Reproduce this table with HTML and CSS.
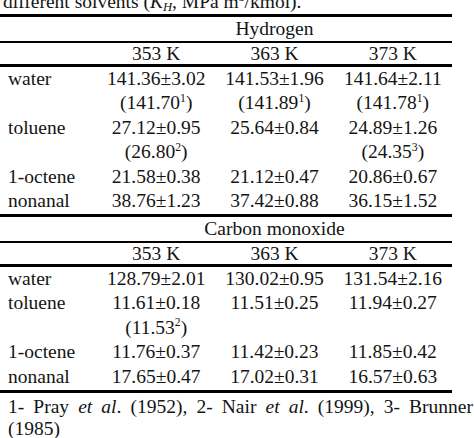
FILE: index.html
```html
<!DOCTYPE html>
<html lang="en">
<head>
<meta charset="UTF-8">
<meta name="viewport" content="width=device-width, initial-scale=1.0">
<title>Henry constants</title>
<link rel="stylesheet" href="styles.css">
</head>
<body>

<p class="caption">different solvents (<i>K<sub>H</sub></i>, MPa m<sup>3</sup>/kmol).</p>

<table class="henry">
  <colgroup>
    <col class="col-solvent">
    <col class="col-temp">
    <col class="col-temp">
    <col class="col-temp">
  </colgroup>

  <!-- Hydrogen -->
  <tbody>
    <tr class="gas-row first">
      <td></td>
      <td colspan="3">Hydrogen</td>
    </tr>
    <tr class="temp-row">
      <td></td>
      <td>353 K</td>
      <td>363 K</td>
      <td>373 K</td>
    </tr>
    <tr>
      <td class="solvent">water</td>
      <td>141.36±3.02</td>
      <td>141.53±1.96</td>
      <td>141.64±2.11</td>
    </tr>
    <tr>
      <td></td>
      <td>(141.70<sup>1</sup>)</td>
      <td>(141.89<sup>1</sup>)</td>
      <td>(141.78<sup>1</sup>)</td>
    </tr>
    <tr>
      <td class="solvent">toluene</td>
      <td>27.12±0.95</td>
      <td>25.64±0.84</td>
      <td>24.89±1.26</td>
    </tr>
    <tr>
      <td></td>
      <td>(26.80<sup>2</sup>)</td>
      <td></td>
      <td>(24.35<sup>3</sup>)</td>
    </tr>
    <tr>
      <td class="solvent">1-octene</td>
      <td>21.58±0.38</td>
      <td>21.12±0.47</td>
      <td>20.86±0.67</td>
    </tr>
    <tr class="last">
      <td class="solvent">nonanal</td>
      <td>38.76±1.23</td>
      <td>37.42±0.88</td>
      <td>36.15±1.52</td>
    </tr>
  </tbody>

  <!-- Carbon monoxide -->
  <tbody>
    <tr class="gas-row">
      <td></td>
      <td colspan="3">Carbon monoxide</td>
    </tr>
    <tr class="temp-row">
      <td></td>
      <td>353 K</td>
      <td>363 K</td>
      <td>373 K</td>
    </tr>
    <tr>
      <td class="solvent">water</td>
      <td>128.79±2.01</td>
      <td>130.02±0.95</td>
      <td>131.54±2.16</td>
    </tr>
    <tr>
      <td class="solvent">toluene</td>
      <td>11.61±0.18</td>
      <td>11.51±0.25</td>
      <td>11.94±0.27</td>
    </tr>
    <tr>
      <td></td>
      <td>(11.53<sup>2</sup>)</td>
      <td></td>
      <td></td>
    </tr>
    <tr>
      <td class="solvent">1-octene</td>
      <td>11.76±0.37</td>
      <td>11.42±0.23</td>
      <td>11.85±0.42</td>
    </tr>
    <tr class="last">
      <td class="solvent">nonanal</td>
      <td>17.65±0.47</td>
      <td>17.02±0.31</td>
      <td>16.57±0.63</td>
    </tr>
  </tbody>
</table>

<p class="notes">1- Pray <i>et al</i>. (1952), 2- Nair <i>et al</i>. (1999), 3- Brunner (1985)</p>

</body>
</html>
```

FILE: styles.css
```css
body {
  font-family: "Liberation Serif", "Times New Roman", serif;
  font-size: 19.5px;
  color: #141414;
  background-color: #ffffff;
  margin: 0;
  padding: 0;
  overflow: hidden;
}

.caption {
  margin: -9px 0 1px 0;
  padding-left: 3px;
  line-height: 22px;
  white-space: nowrap;
}

.caption sub {
  font-size: 0.65em;
  line-height: 0;
  vertical-align: -0.25em;
}

.caption sup {
  font-size: 0.6em;
  line-height: 0;
}

/* Table */
.henry {
  width: 452px;
  table-layout: fixed;
  border-collapse: separate;
  border-spacing: 0;
}

.col-solvent {
  width: 97px;
}

.col-temp {
  width: 118.3px;
}

.henry td {
  padding: 0;
  height: 24.6px;
  line-height: 24.6px;
  text-align: center;
  white-space: nowrap;
}

.henry td.solvent {
  text-align: left;
  padding-left: 8px;
}

/* keep the superscript from growing the row */
.henry sup {
  font-size: 0.6em;
  line-height: 0;
  vertical-align: baseline;
  position: relative;
  top: -0.65em;
}

.gas-row td {
  height: 23.5px;
  line-height: 23.5px;
  border-bottom: 2px solid #000;
}

.gas-row.first td {
  border-top: 3px solid #000;
}

.temp-row td {
  height: 21px;
  line-height: 21px;
  border-bottom: 3px solid #000;
}

.last td {
  border-bottom: 3px solid #000;
}

.notes {
  margin: 3px 0 0 0;
  padding: 0 1px 0 8px;
  line-height: 22px;
  text-align: justify;
}
```
